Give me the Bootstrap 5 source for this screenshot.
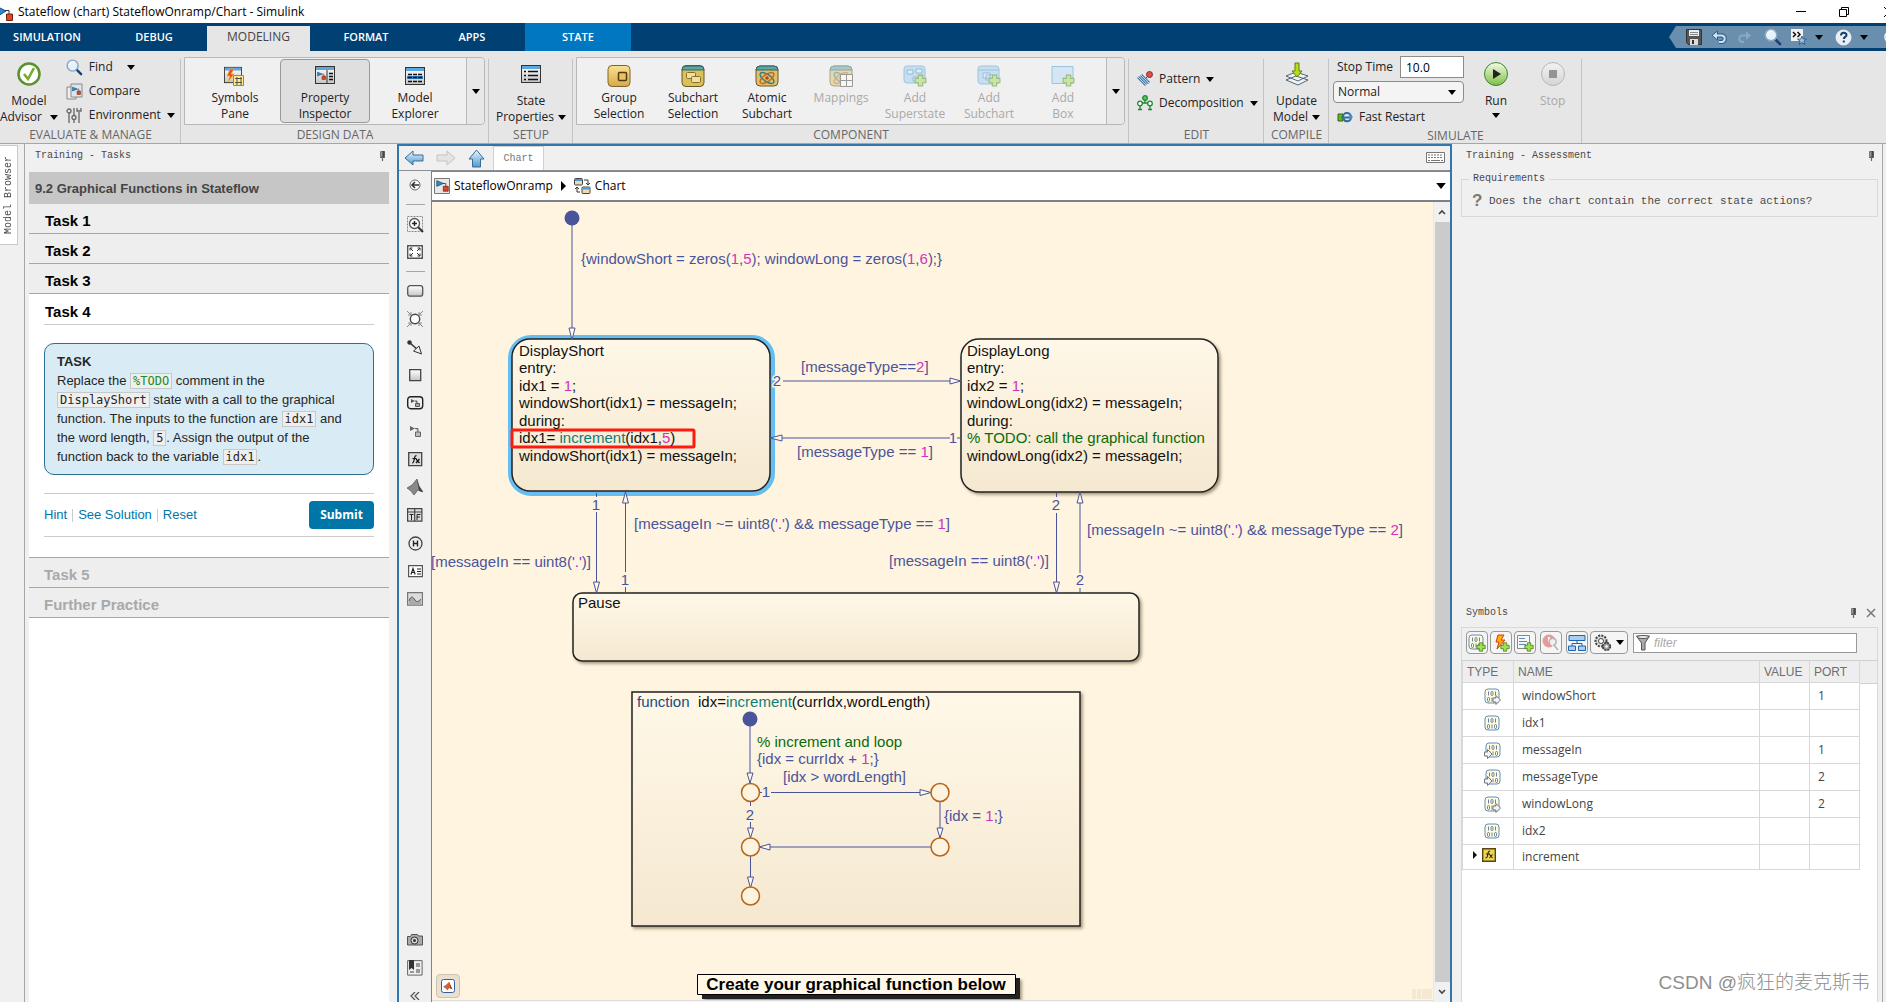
<!DOCTYPE html>
<html lang="en">
<head>
<meta charset="utf-8">
<meta name="viewport" content="width=device-width, initial-scale=1">
<title>Stateflow (chart) StateflowOnramp/Chart - Simulink</title>
<link rel="stylesheet" href="https://cdn.jsdelivr.net/npm/bootstrap@5.3.0/dist/css/bootstrap.min.css">
<style>
  :root { --navy:#004073; --frame:#3475ab; --strip:#e6e6e6; --pane:#f0f0f0; --rule:#a6a6a6; }
  body { font-family:"Open Sans","Noto Sans",sans-serif; font-size:12px; line-height:16px; color:#222; background:var(--pane); }
  button { font:inherit; color:inherit; background:none; border:0; padding:0; }
  svg { display:block; flex:none; }
  .titlebar { height:23px; background:#fff; line-height:23px; color:#000; }
  .tabbar { height:28px; background:var(--navy); }
  .tabbar .tab-btn { width:106px; height:28px; color:#fff; font-weight:600; font-size:11px; line-height:28px; text-align:center; }
  .tabbar .tab-first { width:101px; padding-right:7px; }
  .tabbar .tab-on { width:103px; height:25px; margin:3px 3px 0 0; padding-bottom:4px; background:var(--strip); color:#444; font-weight:400; line-height:21px; font-size:12px; }
  .tabbar .tab-ctx { background:#0077c0; }
  .quick { height:22px; margin-top:3px; width:217px; background:#6a8fae; clip-path:polygon(0 50%,7px 0,100% 0,100% 100%,7px 100%); }
  .strip { height:93px; background:var(--strip); border-bottom:1px solid var(--rule); }
  .grp { position:relative; display:flex; flex-direction:column; height:92px; }
  .grp::after { content:""; position:absolute; right:0; top:8px; bottom:0; width:1px; background:#c3c3c3; }
  .grp-body { height:77px; display:flex; }
  .grp-name { line-height:16px; text-align:center; color:#666; }
  .w-eval{width:181px}.w-design{width:308px}.w-setup{width:84px}.w-comp{width:556px}.w-edit{width:135px}.w-compile{width:65px}.w-sim{width:253px}
  .tool-lg { display:flex; flex-direction:column; align-items:center; padding-top:11px; gap:7px; text-align:center; }
  .tool-sm { display:flex; align-items:center; height:24px; gap:6px; white-space:nowrap; }
  .gallery { display:flex; height:68px; margin:6px 4px 0 3px; padding-left:5px; border:1px solid #b8b8b8; border-radius:0 4px 4px 0; background:#f0f0f0; flex:1; }
  .gallery .more { width:18px; border-left:1px solid #b8b8b8; background:#e8e8e8; display:flex; align-items:center; justify-content:center; margin-left:auto; border-radius:0 4px 4px 0; }
  .gal-item { width:90px; height:64px; margin-top:1px; display:flex; flex-direction:column; align-items:center; padding-top:5px; gap:3px; border:1px solid transparent; border-radius:4px; }
  .gal-item.narrow { width:74px; }
  .gal-on { background:#dfdfdf; border-color:#999; }
  .off { color:#a9a9a9; }
  .off svg { opacity:.5; }
  .sim-fields { padding:5px 0 0 4px; gap:3px; }
  .stoptime { width:64px; height:22px; border:1px solid #8c8c8c; padding:0 5px; background:#fff; border-radius:0; }
  .simmode { display:block; width:131px; height:22px; border:1px solid #8c8c8c; border-radius:4px; background:#f4f4f4; padding:0 4px; appearance:none; color:#222; }
  .over-caret { position:absolute; right:8px; top:9px; pointer-events:none; }
  .mono-ui { font-family:"Liberation Mono",monospace; font-size:10px; line-height:14px; color:#4a4a4a; }
  .work { min-height:0; }
  .rail { width:25px; border-right:1px solid var(--rule); background:var(--pane); }
  .rail-tab { width:18px; height:100px; margin-top:1px; background:#fff; border:1px solid #c8c8c8; border-left:0; display:flex; align-items:center; justify-content:center; writing-mode:vertical-rl; }
  .rail-tab span { transform:rotate(180deg); white-space:nowrap; }
  .tasks { width:372px; padding:0 8px 0 4px; font-family:"Liberation Sans",sans-serif; }
  .pane-head { height:28px; padding:0 2px 0 6px; }
  .course { height:32px; background:#c6c6c6; padding-left:6px; font-size:13px; line-height:33px; font-weight:700; color:#444; }
  .task-row { height:30px; margin:0; border-bottom:1px solid var(--rule); background:#eee; padding-left:16px; font-size:15px; line-height:33px; font-weight:700; color:#000; overflow:hidden; }
  .task-row.idle { color:#a9a9a9; padding-left:15px; }
  .task-open { background:#fff; border-bottom:1px solid var(--rule); padding:0 15px 20px; }
  .task-open h2 { margin:0 0 18px; height:31px; border-bottom:1px solid #ccc; font-size:15px; line-height:35px; font-weight:700; color:#000; padding-left:1px; }
  .task-box { border:1px solid #2d7092; border-radius:10px; background:#d9ecf5; padding:8px 16px 8px 12px; font-size:13px; line-height:19px; color:#262626; margin-bottom:18px; }
  .task-box code { font-family:"DejaVu Sans Mono",monospace; font-size:12px; line-height:14px; color:#262626; background:#efefef; border:1px solid #c8c8c8; padding:0 2px; display:inline-block; }
  .task-box code.todo { color:#228b22; }
  .actions { border-top:1px solid #ccc; border-bottom:1px solid #ccc; height:44px; font-size:13px; }
  .actions a { color:#0076a8; text-decoration:none; }
  .actions .bar-sep { width:1px; height:13px; background:#ccc; margin:0 5px; }
  .submit { width:65px; height:28px; background:#0076a8; border-radius:4px; color:#fff; font-family:"Open Sans",sans-serif; font-size:12px; font-weight:700; }
  .editor { border:2px solid var(--frame); border-bottom:0; min-width:0; }
  .doc-tabs { height:25px; border-bottom:1px solid #8d8d96; padding-left:5px; }
  .doc-tabs .doc { width:51px; height:24px; background:#fff; border:1px solid #d0d0d0; border-bottom:0; display:flex; align-items:center; justify-content:center; color:#777; }
  .palette { width:33px; border-right:1px solid #7d8392; align-items:center; display:flex; flex-direction:column; overflow:hidden; }
  .palette button { height:28px; width:32px; display:flex; align-items:center; justify-content:center; flex:none; }
  .palette .rule { width:19px; height:1px; background:#a6a6a6; flex:none; margin:5px 0; }
  .palette .tail { margin-bottom:-8px; }
  .crumbs { height:31px; background:#fff; border-top:1px solid #7d8392; border-bottom:2px solid #7d7f8c; color:#000; padding:0 4px 0 2px; }
  .crumbs a { color:#000; text-decoration:none; }
  .canvas { background:#fff4e0; overflow:hidden; position:relative; min-height:0; }
  .canvas text { font-family:"Liberation Sans",sans-serif; font-size:15px; fill:#111; white-space:pre; }
  .canvas .tl { fill:#4a549b; }
  .canvas .ct { text-anchor:middle; }
  .canvas .nm { fill:#d232c0; } .canvas .st { fill:#a020f0; } .canvas .fn { fill:#117c78; } .canvas .cm { fill:#0a6b0a; } .canvas .kw { fill:#174a86; }
  .canvas .note { font-size:17px; font-weight:700; fill:#000; text-anchor:middle; }
  .matlab-btn { position:absolute; left:4px; bottom:4px; width:24px; height:24px; background:#eae0cf; border:1px solid #c9c2b6; border-radius:4px; display:flex; align-items:center; justify-content:center; }
  .vscroll { width:17px; background:#f0f0f0; display:flex; flex-direction:column; align-items:center; border-left:1px solid #e8e8e8; }
  .vscroll .thumb { background:#cbcbcb; flex:1; width:15px; }
  .vscroll svg { margin:7px 0; }
  .side { width:434px; padding:0 3px 0 8px; }
  .side-in { border-right:1px solid var(--rule); }
  .reqs { border:1px solid #d8d8d8; height:45px; padding:0 10px; margin:0 4px 0 1px; min-width:0; }
  .reqs legend { float:none; width:auto; margin:0 0 6px -3px; padding:0 4px; }
  .reqs .q { font:700 17px/18px "Liberation Sans",sans-serif; color:#777; width:17px; }
  .reqs .ask { font-size:11px; }
  .symbols { height:47%; }
  .sym { margin:0 4px 0 1px; border:1px solid #d8d8d8; border-bottom:0; background:#fff; }
  .sym-bar { height:33px; background:var(--pane); border-bottom:1px solid #d0d0d0; padding:0 20px 2px 4px; }
  .sym-bar button { height:23px; width:22px; border:1px solid #999; border-radius:4px; background:#f5f5f5; display:flex; align-items:center; justify-content:center; flex:none; margin-right:2px; }
  .sym-bar .apart { margin-left:2px; }
  .sym-bar .wide { width:38px; gap:4px; margin-right:5px; }
  .filter { position:relative; }
  .filter input { width:100%; height:20px; border:1px solid #999; border-radius:0; padding:0 4px 0 20px; font:italic 12px/16px "Liberation Sans",sans-serif; background:#fff; display:block; }
  .filter input::placeholder { color:#a9a9a9; opacity:1; }
  .filter svg { position:absolute; left:3px; top:2px; }
  .sym-wrap { background:linear-gradient(#eee 22px,#d0d0d0 22px,#d0d0d0 23px,#fff 23px); }
  .sym-grid { width:calc(100% - 17px); table-layout:fixed; border-collapse:collapse; color:#444; background:#fff; margin:0; }
  .sym-grid .c-type { width:51px; } .sym-grid .c-num { width:50px; }
  .sym-grid th { height:22px; background:#eee; font:12px/16px "Liberation Sans",sans-serif; color:#6e6e6e; border:1px solid #d8d8d8; border-top:0; padding:0 4px; }
  .sym-grid td { height:27px; border:1px solid #d8d8d8; padding:0 8px; }
  .sym-grid tr:last-child td { height:25px; }
  .sym-grid td:first-child { padding:0; }
  .sym-grid .kind { margin-left:21px; }
  .wmark { position:absolute; right:16px; bottom:4px; font:19px/30px "Liberation Sans","Noto Sans CJK SC",sans-serif; color:#8e8e8e; text-shadow:1px 1px 0 #fff; white-space:nowrap; font-weight:300; }
</style>
<script src="https://cdn.jsdelivr.net/npm/bootstrap@5.3.0/dist/js/bootstrap.bundle.min.js"></script>
</head>
<body>
<svg width="0" height="0" class="position-absolute" aria-hidden="true">
  <defs>
    <linearGradient id="gBlue" x1="0" y1="0" x2="0" y2="1"><stop offset="0" stop-color="#eaf5fc"/><stop offset="1" stop-color="#4f9bd0"/></linearGradient>
    <linearGradient id="gGold" x1="0" y1="0" x2="0" y2="1"><stop offset="0" stop-color="#fbe08e"/><stop offset="1" stop-color="#d9a94a"/></linearGradient>
    <linearGradient id="gGray" x1="0" y1="0" x2="0" y2="1"><stop offset="0" stop-color="#fff"/><stop offset="1" stop-color="#c4c4c4"/></linearGradient>
    <linearGradient id="gGreen" x1="0" y1="0" x2="0" y2="1"><stop offset="0" stop-color="#f4fbe8"/><stop offset="1" stop-color="#7cc043"/></linearGradient>
    <linearGradient id="gState" x1="0" y1="0" x2="0" y2="1"><stop offset="0" stop-color="#fff8e8"/><stop offset="1" stop-color="#f5e8d0"/></linearGradient>
    <filter id="soft" x="-10%" y="-10%" width="120%" height="120%"><feDropShadow dx="2" dy="2" stdDeviation="1.5" flood-color="#5a5030" flood-opacity=".55"/></filter>
  </defs>
  <symbol id="caret" viewBox="0 0 8 5"><path d="M0 0h8L4 5z" fill="#000"/></symbol>
  <symbol id="pin" viewBox="0 0 9 12"><path d="M2.500 1.500h4v5h-4z" fill="#999" stroke="#777"/><path d="M5.500 1v6" stroke="#444" stroke-width="2"/><path d="M2 7.500h5M4.500 8v3" stroke="#666" stroke-width="1.200"/></symbol>
  <symbol id="blocks" viewBox="0 0 16 16"><path d="M1 2l8 3.500L1 9z" fill="#2b8cc4" stroke="#174f7c"/><path d="M8 5.500h4V9" fill="none" stroke="#333"/><path d="M9 9h6v6H9z" fill="#d6492a" stroke="#7c2010"/></symbol>
  <symbol id="plus" viewBox="0 0 12 12"><path d="M4 1h4v3h3v4H8v3H4V8H1V4h3z" fill="#a5dc57" stroke="#44861b"/></symbol>
  <symbol id="lens" viewBox="0 0 18 18"><path d="M11 11l5 5" stroke="#1c3f78" stroke-width="2.600" stroke-linecap="round"/><circle cx="7" cy="7" r="5.800" fill="#e4f2fb" stroke="#8aa6c0" stroke-width="1.500"/><path d="M4 6a4 4 0 0 1 4-3" stroke="#fff" fill="none"/></symbol>
  <symbol id="data" viewBox="0 0 17 17"><rect x="1" y="1" width="14" height="14" rx="3" fill="#fffbdc" stroke="#5b8fc0"/><g fill="none" stroke="#5a7396" stroke-width=".9"><path d="M4.500 3.500v4M11.500 3.500v4M8 9.500v4"/><rect x="7" y="3.500" width="2" height="4" rx="1"/><rect x="3.500" y="9.500" width="2" height="4" rx="1"/><rect x="10.500" y="9.500" width="2" height="4" rx="1"/></g></symbol>
  <symbol id="data-out" viewBox="0 0 17 17"><use href="#data" width="17" height="17"/><path d="M9 10h3V7.500l4.500 4.500-4.500 4.500V14H9z" fill="#f4f4f4" stroke="#777"/></symbol>
  <symbol id="data-in" viewBox="0 0 17 17"><use href="#data" x="1" width="17" height="17"/><path d="M.5 10h3V7.500L8 12l-4.500 4.500V14h-3z" fill="#f4f4f4" stroke="#777"/></symbol>
  <symbol id="win" viewBox="0 0 20 20"><rect x=".5" y="1.500" width="19" height="17" fill="url(#gGray)" stroke="#333"/><path d="M1 2h18v3H1z" fill="#5fa6dc"/></symbol>
  <symbol id="atom" viewBox="0 0 24 24"><rect x="1" y="1" width="22" height="20" rx="4" fill="#e0c169" stroke="#6a5726"/><path d="M1 5a4 4 0 0 1 4-4h14a4 4 0 0 1 4 4z" fill="#5fa5a3" stroke="#2f6663"/><g fill="none" stroke="#2b7f96" stroke-width="1.500"><ellipse cx="12" cy="13" rx="8" ry="3.500" transform="rotate(35 12 13)"/><ellipse cx="12" cy="13" rx="8" ry="3.500" transform="rotate(-35 12 13)" stroke="#c56a1a"/></g><circle cx="12" cy="13" r="1.800" fill="#c3400f"/></symbol>
  <symbol id="peaks" viewBox="0 0 16 16"><path d="M0 9l5-3 2 3-3 3z" fill="#4b8fc4"/><path d="M5 6l5-5 2 6 3 6-5-2-3 4-3-4z" fill="#d8622a"/><path d="M10 1l2 6 3 6-3-1z" fill="#8e2412"/></symbol>
  <symbol id="peaks-gray" viewBox="0 0 16 16"><path d="M0 9l5-3 5-6 2 7 4 6-5-2-4 5-3-4z" fill="#888" stroke="#444" stroke-width=".6"/><path d="M10 0l2 7 4 6-4-1z" fill="#444"/></symbol>
</svg>

<div class="d-flex flex-column vh-100 overflow-hidden">
  <header class="titlebar d-flex align-items-center flex-shrink-0">
    <svg width="14" height="18" viewBox="2 0 14 18"><path d="M0 4l8 4-8 5z" fill="#2b8cc4" stroke="#174f7c"/><path d="M7 7.500h4V11" fill="none" stroke="#333"/><path d="M8.500 11h6v6.500h-6z" fill="#d6492a" stroke="#7c2010"/></svg>
    <span class="ms-1">Stateflow (chart) StateflowOnramp/Chart - Simulink</span>
    <button class="ms-auto" aria-label="Minimize"><svg width="10" height="12"><path d="M0 5.500h10" stroke="#000"/></svg></button>
    <button class="mx-4 ps-2 pe-2" aria-label="Restore"><svg width="12" height="12"><path d="M1.500 3.500h7v7h-7zM3.500 3V1.500h7v7H9" fill="none" stroke="#000"/></svg></button>
    <button aria-label="Close"><svg width="4" height="12"><path d="M2 1l10 10M2 11L12 1" stroke="#000"/></svg></button>
  </header>

  <nav class="tabbar d-flex flex-shrink-0">
    <button class="tab-btn tab-first">SIMULATION</button><button class="tab-btn">DEBUG</button><button class="tab-btn tab-on">MODELING</button><button class="tab-btn">FORMAT</button><button class="tab-btn">APPS</button><button class="tab-btn tab-ctx">STATE</button>
    <div class="quick ms-auto d-flex align-items-center">
      <button class="ms-3" aria-label="Save"><svg width="18" height="18"><path d="M1.500 1.500h15v15h-13l-2-2z" fill="#555" stroke="#333"/><path d="M4 2h10v6H4z" fill="#eee"/><path d="M5 4.500h8M5 6.500h8" stroke="#888"/><path d="M5 11h8v6H5z" fill="#ddd"/><path d="M7 12h2v4H7z" fill="#333"/></svg></button>
      <button class="ms-2" aria-label="Undo"><svg width="17" height="15"><path d="M6 5.500h5a3.300 3.300 0 0 1 0 6.500H8" fill="none" stroke="#2a5a88" stroke-width="4"/><path d="M6.500 1L1 5.500 6.500 10z" fill="#cfe2f2" stroke="#2a5a88"/><path d="M5 5.500h6a3.300 3.300 0 0 1 0 6.500H8" fill="none" stroke="#cfe2f2" stroke-width="2"/></svg></button>
      <button class="ms-2" aria-label="Redo"><svg width="16" height="15"><path d="M12 5.500H6a3.300 3.300 0 0 0 0 6.500h2" fill="none" stroke="#87a9c4" stroke-width="2"/><path d="M10 1l5 4.500-5 4.500z" fill="#87a9c4"/></svg></button>
      <button class="ms-2 ps-1" aria-label="Search"><svg width="18" height="18"><use href="#lens"/></svg></button>
      <button class="ms-2 d-flex align-items-center gap-1" aria-label="Favorites"><svg width="17" height="18"><path d="M1 1h12v12H1z" fill="#f2f2f2"/><path d="M3 4l2.500 2.500L3 9M7.500 4L10 6.500 7.500 9" fill="none" stroke="#111" stroke-width="1.500"/><path d="M12 8l1.200 3 3.300.2-2.600 2 1 3.300-2.900-1.900-2.900 1.900 1-3.300-2.600-2L10.800 11z" fill="#9ec3e2" stroke="#234f7c" stroke-width=".8"/></svg><svg class="ms-1" width="8" height="5"><use href="#caret"/></svg></button>
      <button class="ms-2 ps-1 d-flex align-items-center gap-2" aria-label="Help"><svg width="17" height="17"><circle cx="8.500" cy="8.500" r="7.500" fill="#e8f0f7" stroke="#eee"/><path d="M6 6.500c0-3.500 5.500-3.500 5.500-.5 0 2-2.700 1.800-2.700 4M8.800 11.500v2" fill="none" stroke="#173f6b" stroke-width="2"/></svg><svg width="8" height="5"><use href="#caret"/></svg></button>
      <button class="ms-3" aria-label="Options"><svg width="12" height="14"><circle cx="7" cy="7" r="6" fill="#173f6b" stroke="#fff" stroke-width="1.500"/><path d="M4 5h6l-3 4z" fill="#fff"/></svg></button>
    </div>
  </nav>

  <section class="strip d-flex flex-shrink-0">
    <div class="grp w-eval">
      <div class="grp-body">
        <button class="tool-lg">
          <svg width="24" height="24"><circle cx="12" cy="12" r="10.500" fill="#fff" stroke="#5c9130" stroke-width="2.500"/><path d="M7 12l4 5 6-11" fill="none" stroke="#77ab2e" stroke-width="2.600"/></svg>
          <span>Model<br><span class="d-flex align-items-center gap-2">Advisor <svg width="8" height="5"><use href="#caret"/></svg></span></span>
        </button>
        <div class="ms-2 pt-1">
          <button class="tool-sm"><svg width="17" height="17"><use href="#lens"/></svg>Find<svg class="ms-2" width="8" height="5"><use href="#caret"/></svg></button>
          <button class="tool-sm"><svg width="17" height="17"><path d="M1 4h9v12H1z" fill="#eee" stroke="#888"/><path d="M5 1h11v13H5z" fill="#dbe6ef" stroke="#888"/><use href="#blocks" x="6" y="3" width="9" height="9"/></svg>Compare</button>
          <button class="tool-sm"><svg width="17" height="17"><g stroke="#666" stroke-width="1.300" fill="none"><path d="M3 6v10M8 1v8M8 13v3M13 5v11"/><circle cx="3" cy="4" r="2"/><circle cx="8" cy="10.500" r="2"/><path d="M11 1v3h4V1"/></g></svg>Environment<svg width="8" height="5"><use href="#caret"/></svg></button>
        </div>
      </div>
      <div class="grp-name">EVALUATE &amp; MANAGE</div>
    </div>
    <div class="grp w-design">
      <div class="grp-body"><div class="gallery">
        <button class="gal-item"><svg width="22" height="22"><use href="#win" width="18" height="20"/><path d="M6 4L3 11h3l-2 6 6-8H7l3-5z" fill="#ef4b2a" stroke="#f5b800" stroke-width=".7"/><path d="M9.500 10.500h10v10h-10z" fill="#ffe98a" stroke="#a88a20"/><path d="M11 13.500h7M11 17.500h7M13 12v8M17 12v8" stroke="#555"/></svg><span>Symbols<br>Pane</span></button>
        <button class="gal-item gal-on"><svg width="20" height="22"><use href="#win" width="20" height="20"/><use href="#blocks" x="2" y="6" width="9" height="9"/><path d="M12 5v13" stroke="#333"/><path d="M14 8.500h4M14 11.500h4M14 14.500h4" stroke="#111" stroke-width="1.500"/></svg><span>Property<br>Inspector</span></button>
        <button class="gal-item"><svg width="20" height="22"><use href="#win" y="1" width="20" height="20"/><path d="M2 12.500h16" stroke="#2f7fc0" stroke-width="3"/><path d="M3 9.500h4M8 9.500h4M13 9.500h4M3 12.500h4M8 12.500h4M13 12.500h4M3 16.500h4M8 16.500h4M13 16.500h4" stroke="#111" stroke-width="1.400"/></svg><span>Model<br>Explorer</span></button>
        <button class="more" aria-label="More design tools"><svg width="8" height="5"><use href="#caret"/></svg></button>
      </div></div>
      <div class="grp-name">DESIGN DATA</div>
    </div>
    <div class="grp w-setup">
      <div class="grp-body justify-content-center"><button class="tool-lg"><svg width="20" height="24"><use href="#win" y="2" width="20" height="20"/><path d="M3 9.500h2M3 13.500h2M3 17.500h2M7 9.500h10M7 13.500h10M7 17.500h10" stroke="#111" stroke-width="1.500"/></svg><span>State<br><span class="d-flex align-items-center gap-1">Properties <svg width="8" height="5"><use href="#caret"/></svg></span></span></button></div>
      <div class="grp-name">SETUP</div>
    </div>
    <div class="grp w-comp">
      <div class="grp-body"><div class="gallery">
        <button class="gal-item narrow"><svg width="24" height="22"><rect x="1" y="0.500" width="22" height="21" rx="4" fill="url(#gGold)" stroke="#7a6630"/><rect x="11.500" y="7.500" width="8" height="8" rx="1" fill="#eac062" stroke="#4a3d14" stroke-width="1.500"/></svg><span>Group<br>Selection</span></button>
        <button class="gal-item narrow"><svg width="24" height="22"><rect x="1" y=".5" width="22" height="21" rx="4" fill="#dcc059" stroke="#6a5726"/><path d="M1 5a4 4 0 0 1 4-4h14a4 4 0 0 1 4 4z" fill="#5fa5a3" stroke="#2f6663"/><rect x="5.500" y="7.500" width="9" height="6" rx="1" fill="#f2df9a" stroke="#857034"/><rect x="10.500" y="11.500" width="9" height="6" rx="1" fill="#f2df9a" stroke="#857034"/></svg><span>Subchart<br>Selection</span></button>
        <button class="gal-item narrow"><svg width="24" height="22" viewBox="0 0 24 22"><use href="#atom" width="24" height="24"/></svg><span>Atomic<br>Subchart</span></button>
        <button class="gal-item narrow off" disabled><svg width="24" height="22"><use href="#atom" width="24" height="24"/><path d="M11.500 9.500h12v12h-12zM17.500 10v12M12 15.500h12" fill="#ffe" stroke="#444"/></svg><span>Mappings</span></button>
        <button class="gal-item narrow off" disabled><svg width="24" height="22"><rect x="1" y="1" width="21" height="17" rx="3" fill="#9fd0f2" stroke="#4a98d0"/><path d="M4 5h6v4H4zM13 4h6v4h-6zM10 12h6v4h-6z" fill="#d4eafa" stroke="#3b86c0"/><use href="#plus" x="11" y="9" width="13" height="13"/></svg><span>Add<br>Superstate</span></button>
        <button class="gal-item narrow off" disabled><svg width="24" height="22"><rect x="1" y="1" width="21" height="18" rx="3" fill="#9fd0f2" stroke="#4a98d0"/><path d="M1 5h21" stroke="#4a98d0"/><path d="M6 8h7v5H6zM9 10h7v5H9z" fill="#d4eafa" stroke="#3b86c0"/><use href="#plus" x="11" y="9" width="13" height="13"/></svg><span>Add<br>Subchart</span></button>
        <button class="gal-item narrow off" disabled><svg width="24" height="22"><path d="M1 1.500h21v17H1z" fill="#b9ddf7" stroke="#4a98d0"/><use href="#plus" x="11" y="9" width="13" height="13"/></svg><span>Add<br>Box</span></button>
        <button class="more" aria-label="More components"><svg width="8" height="5"><use href="#caret"/></svg></button>
      </div></div>
      <div class="grp-name">COMPONENT</div>
    </div>
    <div class="grp w-edit">
      <div class="grp-body flex-column ps-2 pt-3">
        <button class="tool-sm"><svg width="16" height="16"><path d="M1 6l8 8M4 4l8 8" stroke="#4d7fae" stroke-width="3"/><path d="M1 6l8 8M4 4l8 8" stroke="#b7d3ea"/><path d="M9 7l3-3" stroke="#555"/><circle cx="12.500" cy="3.500" r="3" fill="#d9534a" stroke="#8e2a24"/></svg>Pattern<svg width="8" height="5"><use href="#caret"/></svg></button>
        <button class="tool-sm"><svg width="16" height="16"><g fill="#fff" stroke="#1d8a2d" stroke-width="1.300"><path d="M8 5v3M3 8h10M3 8v6M13 8v6M1 14.500h4M11 14.500h4"/><circle cx="8" cy="3" r="2.300" fill="#5ec06a"/><circle cx="3" cy="8.500" r="2.300"/><circle cx="13" cy="8.500" r="2.300"/></g></svg>Decomposition<svg width="8" height="5"><use href="#caret"/></svg></button>
      </div>
      <div class="grp-name">EDIT</div>
    </div>
    <div class="grp w-compile">
      <div class="grp-body justify-content-center"><button class="tool-lg"><svg width="24" height="24"><path d="M1 18l10-4 12 4-10 5zM1 14l10-4 12 4-10 5z" fill="#eef3f5" stroke="#456" stroke-width=".9"/><path d="M10 1h4v8h3l-5 6-5-6h3z" fill="#b6dd1c" stroke="#5d7f0a"/></svg><span>Update<br><span class="d-flex align-items-center gap-1">Model <svg width="8" height="5"><use href="#caret"/></svg></span></span></button></div>
      <div class="grp-name">COMPILE</div>
    </div>
    <div class="grp w-sim">
      <div class="grp-body">
        <div class="sim-fields d-flex flex-column">
          <div class="d-flex align-items-center"><label for="stoptime" class="flex-grow-1 ps-1">Stop Time</label><input id="stoptime" class="stoptime" value="10.0"></div>
          <div class="position-relative"><select class="simmode" aria-label="Simulation mode"><option>Normal</option></select><svg class="over-caret" width="8" height="5"><use href="#caret"/></svg></div>
          <button class="tool-sm ps-1"><svg width="16" height="13"><path d="M1 3h5v7H1z" fill="#69b32d" stroke="#2f6a10"/><path d="M6 6.500a4 4 0 0 1 8-1M14 7a4 4 0 0 1-7.500 1M4 6.500h9" fill="none" stroke="#2f6aa0" stroke-width="2"/><path d="M12 2l4 4-4 4z" fill="#4d8fc8"/></svg>Fast Restart</button>
        </div>
        <button class="tool-lg ms-3 ps-1">
          <svg width="24" height="24"><circle cx="12" cy="12" r="11.500" fill="url(#gGreen)" stroke="#3d8433"/><path d="M9 7l8 5-8 5z" fill="#222"/></svg>
          <span>Run<svg class="mt-1 mx-auto" width="8" height="5"><use href="#caret"/></svg></span>
        </button>
        <button class="tool-lg ms-4 ps-2 off" disabled><svg width="24" height="24"><circle cx="12" cy="12" r="11.500" fill="url(#gGray)" stroke="#888"/><path d="M8 8h8v8H8z" fill="#444"/></svg><span>Stop</span></button>
      </div>
      <div class="grp-name">SIMULATE</div>
    </div>
  </section>

  <main class="work d-flex flex-grow-1">
    <aside class="rail flex-shrink-0"><button class="rail-tab mono-ui"><span>Model Browser</span></button></aside>

    <section class="tasks d-flex flex-column flex-shrink-0">
      <div class="pane-head mono-ui d-flex align-items-center justify-content-between flex-shrink-0 pb-1"><span>Training - Tasks</span><svg width="9" height="12"><use href="#pin"/></svg></div>
      <div class="course flex-shrink-0">9.2 Graphical Functions in Stateflow</div>
      <h2 class="task-row flex-shrink-0">Task 1</h2>
      <h2 class="task-row flex-shrink-0">Task 2</h2>
      <h2 class="task-row flex-shrink-0">Task 3</h2>
      <article class="task-open">
        <h2>Task 4</h2>
        <div class="task-box"><strong>TASK</strong><br>Replace the <code class="todo">%TODO</code> comment in the <code>DisplayShort</code> state with a call to the graphical function. The inputs to the function are <code>idx1</code> and the word length, <code>5</code>. Assign the output of the function back to the variable <code>idx1</code>.</div>
        <div class="actions d-flex align-items-center">
          <a href="#">Hint</a><span class="bar-sep"></span><a href="#">See Solution</a><span class="bar-sep"></span><a href="#">Reset</a>
          <button class="submit ms-auto">Submit</button>
        </div>
      </article>
      <h2 class="task-row idle flex-shrink-0">Task 5</h2>
      <h2 class="task-row idle flex-shrink-0">Further Practice</h2>
      <div class="flex-grow-1 bg-white"></div>
    </section>

    <section class="editor d-flex flex-column flex-grow-1">
      <div class="doc-tabs d-flex align-items-center flex-shrink-0">
        <button aria-label="Back"><svg width="20" height="16"><path d="M1 8l8-7v4h10v6H9v4z" fill="url(#gBlue)" stroke="#3a6c96"/></svg></button>
        <button class="ms-2 ps-1" aria-label="Forward"><svg width="20" height="16"><path d="M19 8l-8-7v4H1v6h10v4z" fill="#e4e4e4" stroke="#c4c4c4"/></svg></button>
        <button class="ms-2 ps-1" aria-label="Up"><svg width="17" height="19"><path d="M8.500 1L1 10h3.500v8h8v-8H16z" fill="url(#gBlue)" stroke="#3a6c96"/></svg></button>
        <button class="doc mono-ui ms-2">Chart</button>
        <button class="ms-auto me-1" aria-label="Keyboard"><svg width="20" height="12"><path d="M.5.500h18v10H.5z" fill="#fff" stroke="#777"/><path d="M2 3h15M2 5.500h15" stroke="#777" stroke-dasharray="2 1"/><path d="M2 8.500h2M5 8.500h9M15 8.500h2" stroke="#777"/></svg></button>
      </div>
      <div class="work d-flex flex-grow-1">
        <div class="palette flex-shrink-0">
          <button aria-label="Hide browser"><svg width="12" height="12"><circle cx="6" cy="6" r="5" fill="#fff" stroke="#666"/><path d="M10 6H3M6 3L3 6l3 3" stroke="#333" stroke-width="1.600" fill="none"/></svg></button>
          <div class="rule"></div>
          <button aria-label="Zoom"><svg width="17" height="17"><path d="M.5.500h15v15H.5z" fill="none" stroke="#888" stroke-dasharray="2 1"/><path d="M11 11l5 5" stroke="#333" stroke-width="2"/><circle cx="7.500" cy="7.500" r="5" fill="#fff" stroke="#555" stroke-width="1.300"/><path d="M5 7.500h5M7.500 5v5" stroke="#222" stroke-width="1.400"/></svg></button>
          <button aria-label="Fit to view"><svg width="16" height="14"><path d="M.7.700h14.600v12.600H.7z" fill="#fff" stroke="#555" stroke-width="1.400"/><path d="M3 5.500V3h2.500M3 3l3 3M10.500 3H13v2.500M13 3l-3 3M3 8.500V11h2.500M3 11l3-3M10.500 11H13V8.500M13 11l-3-3" stroke="#333" fill="none"/></svg></button>
          <div class="rule"></div>
          <button aria-label="State"><svg width="17" height="12"><rect x=".7" y=".7" width="15" height="10.500" rx="2.500" fill="url(#gGray)" stroke="#555" stroke-width="1.300"/></svg></button>
          <button aria-label="Junction"><svg width="17" height="17"><circle cx="8" cy="8" r="4.700" fill="#fff" stroke="#444" stroke-width="1.400"/><path d="M0 0l4 4M4 1v3H1M16 0l-4 4M12 1v3h3M0 16l4-4M1 12h3v3M16 16l-4-4M15 12h-3v3" stroke="#888" fill="none"/></svg></button>
          <button aria-label="Default transition"><svg width="16" height="15"><circle cx="2.500" cy="2.500" r="2.200" fill="#333"/><path d="M3 3l8 7" stroke="#333" stroke-width="1.600"/><path d="M12 6l2.500 8L6.500 11z" fill="#eee" stroke="#333"/></svg></button>
          <button aria-label="Box"><svg width="13" height="13"><path d="M.7.700h11v11H.7z" fill="url(#gGray)" stroke="#444" stroke-width="1.300"/></svg></button>
          <button aria-label="Simulink state"><svg width="17" height="14"><rect x=".7" y=".7" width="15" height="12" rx="3" fill="#eee" stroke="#222" stroke-width="1.400"/><path d="M4 3l4 2-4 2z" fill="#555"/><path d="M8 5h2v3M8.500 7.500h4v3h-4z" fill="#aaa" stroke="#555"/></svg></button>
          <button aria-label="Simulink function"><svg width="13" height="14"><path d="M1 2l5 2.500L1 7z" fill="#666"/><path d="M6 4.500h3V8M6.500 8h5v4.500h-5z" fill="#bbb" stroke="#666"/></svg></button>
          <button aria-label="Graphical function"><svg width="15" height="15"><path d="M.7.700h13v13H.7z" fill="#ddd" stroke="#444" stroke-width="1.300"/><path d="M8.500 3.500c-2 0-2 2-2.300 4s-.7 3.500-2 3.500M4.500 6.500h4M8 7l3.500 4M11.500 7L8 11" fill="none" stroke="#111" stroke-width="1.200"/></svg></button>
          <button aria-label="MATLAB function"><svg width="16" height="16"><use href="#peaks-gray"/></svg></button>
          <button aria-label="Truth table"><svg width="16" height="14"><path d="M.6.600h14.300v12.500H.6zM.6 4h14.300M7.700.600v13" fill="#ddd" stroke="#444" stroke-width="1.200"/><path d="M2.500 6.500h4M4.500 6.500V12M10 12V6.500h3.500M10 9h3" stroke="#222" fill="none"/></svg></button>
          <button aria-label="History junction"><svg width="15" height="15"><circle cx="7.500" cy="7.500" r="6.500" fill="#eee" stroke="#444" stroke-width="1.300"/><path d="M5.500 4.500v6M9.500 4.500v6M5.500 7.500h4" stroke="#222" stroke-width="1.400"/></svg></button>
          <button aria-label="Annotation"><svg width="15" height="13"><path d="M.6.600h13.800v11H.6z" fill="#fff" stroke="#555" stroke-width="1.200"/><path d="M3 9.500l2-6 2.200 6M3.500 7.500h3M9 4h4M9 6.500h4M9 9h4" stroke="#222" fill="none" stroke-width="1.200"/></svg></button>
          <button aria-label="Image"><svg width="16" height="14"><path d="M.6.600h14.800v12.500H.6z" fill="#ddd" stroke="#777" stroke-width="1.200"/><path d="M2 9c2-6 4-4 6-1s4 1 6-1v5H2z" fill="#aaa"/><path d="M2 9c2-6 4-4 6-1s4 1 6-1" fill="none" stroke="#555"/></svg></button>
          <button class="mt-auto" aria-label="Screenshot"><svg width="16" height="12"><path d="M.5 2.500h3l1-2h6l1 1.500h4v9H.5z" fill="#aaa" stroke="#555"/><circle cx="7.500" cy="6.500" r="3.500" fill="#ddd" stroke="#333"/><circle cx="7.500" cy="6.500" r="1.500" fill="#333"/></svg></button>
          <button aria-label="Bookmarks"><svg width="16" height="16"><path d="M.6.600h14.500v14.500H.6z" fill="#eee" stroke="#666"/><path d="M2 0h5v10L4.500 8 2 10z" fill="#333"/><path d="M9 3h4v4H9zM9 9h4v4H9zM3 11h4v2H3z" fill="#999"/></svg></button>
          <button class="tail" aria-label="Collapse"><svg width="10" height="8"><path d="M5 0L1 4l4 4M9 0L5 4l4 4" fill="none" stroke="#555" stroke-width="1.300"/></svg></button>
        </div>
        <div class="d-flex flex-column flex-grow-1 overflow-hidden">
          <nav class="crumbs d-flex align-items-center flex-shrink-0" aria-label="Model path">
            <svg width="16" height="16"><path d="M.5.500h15v15H.5z" fill="#e8e8e8" stroke="#777"/><use href="#blocks" x="2" y="1" width="13" height="13"/></svg>
            <a href="#" class="ms-1">StateflowOnramp</a>
            <svg class="ms-2 me-1" width="5" height="10"><path d="M0 0v10l5-5z" fill="#000"/></svg>
            <svg class="ms-1" width="17" height="16"><rect x=".5" y=".5" width="8" height="6.500" rx="1" fill="#f2d9a6" stroke="#444"/><path d="M1 1h7v2H1z" fill="#3da0dc"/><rect x="8" y="9" width="8" height="6.500" rx="1" fill="#f2d9a6" stroke="#444"/><path d="M8.500 9.500h7v2h-7z" fill="#3da0dc"/><path d="M10 2h4v4M12 5l2 2 2-2M6 14H3v-4M1 11l2-2 2 2" fill="none" stroke="#333"/></svg>
            <a href="#" class="ms-1">Chart</a>
            <svg class="ms-auto" width="10" height="6"><use href="#caret" width="10" height="6"/></svg>
          </nav>
          <div class="work d-flex flex-grow-1">
            <div class="canvas flex-grow-1">
              <svg width="1002" height="799" viewBox="432 202 1002 799">
                <g fill="url(#gState)" stroke="#222" stroke-width="1.500" filter="url(#soft)">
                  <rect x="961" y="339" width="257" height="153" rx="18"/>
                  <rect x="573" y="593" width="566" height="68" rx="9"/>
                  <rect x="632" y="692" width="448" height="234"/>
                </g>
                <rect x="510" y="337" width="263" height="157" rx="21" fill="#66bdf2" stroke="#66bdf2" stroke-width="4"/>
                <rect x="512" y="339" width="258" height="152" rx="18" fill="url(#gState)" stroke="#222" stroke-width="1.500"/>
                <g fill="none" stroke="#4a549b" stroke-width="1">
                  <path d="M572 218V340M783 381H961M950 438H771M957 438h4M596.500 493v4M596.500 512v81M625.500 493v79M625.500 587v6M1056.500 493v4M1056.500 513v80M1080 493v80M1080 588v5M750 719v64M759 792.500h3M771 792.500h160M750.500 801v5M750.500 822v16M940 801v37M931 847H759M750.500 856v32"/>
                  <g fill="#fff8e8">
                    <path d="M569 328h6l-3 12zM593.500 582h6l-3 11zM1053.500 582h6l-3 11zM622.500 503h6l-3-11zM1077 503h6l-3-11zM950 378v6l11-3zM782 435v6l-12-3zM747 773h6l-3 10zM747.500 828h6l-3 10zM937 828h6l-3 10zM747.500 877h6l-3 11zM920 789.500v6l11-3zM770 844v6l-11-3z"/>
                  </g>
                </g>
                <circle cx="572" cy="218" r="7.500" fill="#4a549b"/><circle cx="750" cy="719" r="7.500" fill="#4a549b"/>
                <g fill="#fdf3df" stroke="#b8651b" stroke-width="1.500"><circle cx="750.500" cy="792.500" r="9"/><circle cx="940" cy="792.500" r="9"/><circle cx="750.500" cy="847" r="9"/><circle cx="940" cy="847" r="9"/><circle cx="750.500" cy="896" r="9"/></g>
                <rect x="512" y="430" width="182" height="17" rx="1" fill="none" stroke="#ff1a10" stroke-width="3"/>
                <text x="519" y="356">DisplayShort</text><text x="519" y="373">entry:</text><text x="519" y="391">idx1 = <tspan class="nm">1</tspan>;</text><text x="519" y="408">windowShort(idx1) = messageIn;</text><text x="519" y="426">during:</text><text x="519" y="443">idx1= <tspan class="fn">increment</tspan>(idx1,<tspan class="nm">5</tspan>)</text><text x="519" y="461">windowShort(idx1) = messageIn;</text>
                <text x="967" y="356">DisplayLong</text><text x="967" y="373">entry:</text><text x="967" y="391">idx2 = <tspan class="nm">1</tspan>;</text><text x="967" y="408">windowLong(idx2) = messageIn;</text><text x="967" y="426">during:</text><text x="967" y="443" class="cm">% TODO: call the graphical function</text><text x="967" y="461">windowLong(idx2) = messageIn;</text>
                <text x="578" y="608">Pause</text>
                <text x="637" y="707"><tspan class="kw">function</tspan></text><text x="698" y="707">idx=<tspan class="fn">increment</tspan>(currIdx,wordLength)</text>
                <text class="tl" x="581" y="264">{windowShort = zeros(<tspan class="nm">1</tspan>,<tspan class="nm">5</tspan>); windowLong = zeros(<tspan class="nm">1</tspan>,<tspan class="nm">6</tspan>);}</text>
                <text class="tl" x="801" y="372">[messageType==<tspan class="nm">2</tspan>]</text>
                <text class="tl" x="797" y="457">[messageType == <tspan class="nm">1</tspan>]</text>
                <text class="tl" x="634" y="529">[messageIn ~= uint8(<tspan class="st">'.'</tspan>) &amp;&amp; messageType == <tspan class="nm">1</tspan>]</text>
                <text class="tl" x="431" y="567">[messageIn == uint8(<tspan class="st">'.'</tspan>)]</text>
                <text class="tl" x="889" y="566">[messageIn == uint8(<tspan class="st">'.'</tspan>)]</text>
                <text class="tl" x="1087" y="535">[messageIn ~= uint8(<tspan class="st">'.'</tspan>) &amp;&amp; messageType == <tspan class="nm">2</tspan>]</text>
                <text class="cm" x="757" y="747">% increment and loop</text>
                <text class="tl" x="757" y="764">{idx = currIdx + <tspan class="nm">1</tspan>;}</text>
                <text class="tl" x="783" y="782">[idx &gt; wordLength]</text>
                <text class="tl" x="944" y="821">{idx = <tspan class="nm">1</tspan>;}</text>
                <g stroke="#fff4e0" stroke-width="3"><text class="tl ct" paint-order="stroke" x="777" y="386">2</text></g>
                <text class="tl ct" x="953" y="443">1</text><text class="tl ct" x="596" y="510">1</text><text class="tl ct" x="625" y="585">1</text><text class="tl ct" x="1056" y="510">2</text><text class="tl ct" x="1080" y="585">2</text><text class="tl ct" x="766" y="797">1</text><text class="tl ct" x="750" y="820">2</text>
                <path d="M702 978h318v21H702z" fill="#222" filter="url(#soft)"/>
                <path d="M697.500 974.500h318v20h-318z" fill="#fff8e8" stroke="#000"/>
                <text class="note" x="856" y="990">Create your graphical function below</text>
                <path d="M1412 989h4v10h-4zM1417 989h4v10h-4zM1422 989h10v10h-10z" fill="#f4e8d2"/>
                <path d="M432 1000h1002v1H432z" fill="#ddd"/>
              </svg>
              <button class="matlab-btn" aria-label="Action language"><svg width="14" height="14" viewBox="0 0 14 14"><rect x=".5" y=".5" width="13" height="13" rx="2" fill="#fff" stroke="#2f5f9a"/><use href="#peaks" x="2" y="2" width="10" height="10"/></svg></button>
            </div>
            <div class="vscroll flex-shrink-0"><svg width="8" height="6"><path d="M1 5l3-3 3 3" fill="none" stroke="#444" stroke-width="1.600"/></svg><div class="thumb"></div><svg width="8" height="6"><path d="M1 1l3 3 3-3" fill="none" stroke="#444" stroke-width="1.600"/></svg></div>
          </div>
        </div>
      </div>
    </section>

    <aside class="side flex-shrink-0 position-relative">
      <div class="side-in d-flex flex-column h-100">
        <div class="pane-head mono-ui d-flex align-items-center justify-content-between flex-shrink-0 pb-1"><span>Training - Assessment</span><svg class="me-1" width="9" height="12"><use href="#pin"/></svg></div>
        <fieldset class="reqs mono-ui flex-shrink-0"><legend class="mono-ui">Requirements</legend><div class="d-flex align-items-center"><span class="q">?</span><span class="ask">Does the chart contain the correct state actions?</span></div></fieldset>
        <div class="flex-grow-1"></div>
        <div class="symbols flex-shrink-0 d-flex flex-column">
          <div class="pane-head mono-ui d-flex align-items-center flex-shrink-0"><span>Symbols</span><svg class="ms-auto" width="9" height="12"><use href="#pin"/></svg><button class="ms-2 me-1" aria-label="Close symbols"><svg width="10" height="10"><path d="M1 1l8 8M1 9l8-8" stroke="#777" stroke-width="1.500"/></svg></button></div>
          <div class="sym flex-grow-1">
            <div class="sym-bar d-flex align-items-center">
              <button aria-label="Create data"><svg width="18" height="18"><use href="#data" width="17" height="17"/><use href="#plus" x="8" y="8" width="10" height="10"/></svg></button>
              <button aria-label="Create event"><svg width="18" height="18"><path d="M6 1h6L9 6h4L5 15l2-7H4z" fill="#ffb000" stroke="#d23a10"/><use href="#plus" x="8" y="8" width="10" height="10"/></svg></button>
              <button aria-label="Create message"><svg width="18" height="18"><path d="M1.500 1.500h12v13h-12z" fill="#f5f8fb" stroke="#888"/><path d="M3 4.500h6M3 7.500h8M3 10.500h7" stroke="#5d8ab4"/><use href="#plus" x="8" y="8" width="10" height="10"/></svg></button>
              <button class="apart off" aria-label="Resolve undefined symbols"><svg width="18" height="18"><circle cx="7" cy="7" r="6.500" fill="#d8443a"/><path d="M7 3v5" stroke="#fff" stroke-width="2"/><path d="M8 10a3.500 3.500 0 1 1 4 1l4 5" stroke="#777" fill="#eee" stroke-width="1.600"/></svg></button>
              <button class="apart" aria-label="Show hierarchy"><svg width="18" height="18"><path d="M1 1.500h16v5H1zM.5 12h7v4.500h-7zM10.500 12h7v4.500h-7z" fill="#a8cff2" stroke="#1d64b0"/><path d="M9 7v2.500M4 12V9.500h10V12" fill="none" stroke="#1d64b0"/></svg></button>
              <button class="wide" aria-label="Settings"><svg width="18" height="18"><circle cx="7" cy="7" r="5.500" fill="#ddd" stroke="#444" stroke-width="2" stroke-dasharray="2 1.200"/><circle cx="7" cy="7" r="2.500" fill="#fff" stroke="#444"/><circle cx="12.500" cy="12.500" r="3.800" fill="#999" stroke="#333" stroke-width="1.600" stroke-dasharray="2 1"/><circle cx="12.500" cy="12.500" r="1.300" fill="#fff"/></svg><svg width="8" height="5"><use href="#caret"/></svg></button>
              <div class="filter flex-grow-1"><input type="text" placeholder="filter" aria-label="Filter symbols"><svg width="14" height="16"><path d="M.5 1h13L9 8v7H5.500V8z" fill="#aaa" stroke="#555"/><ellipse cx="7" cy="2" rx="6" ry="1.500" fill="#eee" stroke="#555"/></svg></div>
            </div>
            <div class="sym-wrap">
              <table class="sym-grid">
                <colgroup><col class="c-type"><col><col class="c-num"><col class="c-num"></colgroup>
                <thead><tr><th>TYPE</th><th>NAME</th><th>VALUE</th><th>PORT</th></tr></thead>
                <tbody>
                  <tr><td><svg class="kind" width="17" height="17"><use href="#data-out"/></svg></td><td>windowShort</td><td></td><td>1</td></tr>
                  <tr><td><svg class="kind" width="17" height="17"><use href="#data"/></svg></td><td>idx1</td><td></td><td></td></tr>
                  <tr><td><svg class="kind" width="17" height="17"><use href="#data-in"/></svg></td><td>messageIn</td><td></td><td>1</td></tr>
                  <tr><td><svg class="kind" width="17" height="17"><use href="#data-in"/></svg></td><td>messageType</td><td></td><td>2</td></tr>
                  <tr><td><svg class="kind" width="17" height="17"><use href="#data-out"/></svg></td><td>windowLong</td><td></td><td>2</td></tr>
                  <tr><td><svg class="kind" width="17" height="17"><use href="#data"/></svg></td><td>idx2</td><td></td><td></td></tr>
                  <tr><td><div class="d-flex align-items-center pb-1"><svg class="ms-2 me-1" width="7" height="8"><path d="M2 0v8l4-4z" fill="#111"/></svg><svg width="14" height="14"><path d="M.7.700h12.600v12.600H.7z" fill="#ecd44c" stroke="#5a4316" stroke-width="1.400"/><path d="M8 3c-2 0-2 2-2.300 4S5 10 3.500 10M4 6h4M7.500 6.500l3 3.500M10.500 6.500L7.500 10" fill="none" stroke="#222" stroke-width="1.100"/></svg></div></td><td>increment</td><td></td><td></td></tr>
                </tbody>
              </table>
            </div>
          </div>
        </div>
      </div>
      <div class="wmark">CSDN @疯狂的麦克斯韦</div>
    </aside>
  </main>
</div>
</body>
</html>
